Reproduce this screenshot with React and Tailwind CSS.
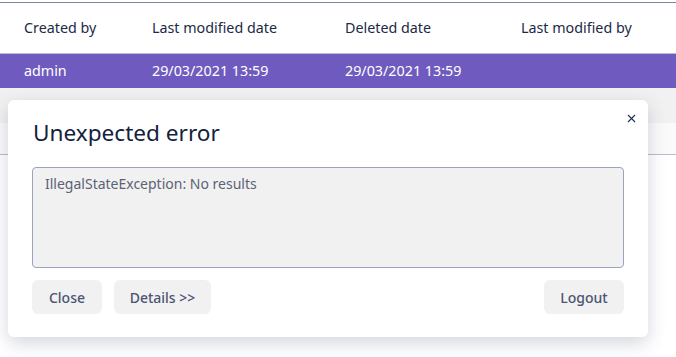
import { X } from "lucide-react";

const cols = ["Created by", "Last modified date", "Deleted date", "Last modified by"];
const colW = ["w-[128px]", "w-[193px]", "w-[176px]", "w-[155px]"];
const row = ["admin", "29/03/2021 13:59", "29/03/2021 13:59", ""];

export default function App() {
  return (
    <div className="relative w-[676px] h-[357px] overflow-hidden bg-white text-[#1b2a47]" style={{ fontFamily: '"Noto Sans", sans-serif' }}>
      <div className="h-[2px]" />
      <div className="border-t border-[#7c85a6]">
        <div className="flex h-[51px] items-center pl-6 text-[14.3px] border-b border-[#b7bdd0]">
          {cols.map((c, i) => (
            <div key={c} className={colW[i]}>{c}</div>
          ))}
        </div>
        <div className="flex h-[34px] items-center pl-6 text-[14.3px] bg-[#6f5bbf] text-white">
          {row.map((c, i) => (
            <div key={i} className={colW[i]}>{c}</div>
          ))}
        </div>
        <div className="h-[35px] bg-[#f1f1f1]" />
        <div className="h-[32px] bg-[#fafafa] border-b border-[#b7bdd0]" />
      </div>

      <div className="absolute left-2 top-[100px] w-[640px] h-[237px] bg-white rounded-md shadow-[0_6px_18px_rgba(60,70,100,0.22)] px-6 pt-[18px]">
        <button className="absolute right-[10px] top-[12px] text-[#1f2d55]">
          <X size={13} strokeWidth={2} />
        </button>
        <h2 className="text-[22.6px] leading-[30px] text-[#14213d] pl-[1px]">Unexpected error</h2>
        <div className="mt-[19px] h-[101px] rounded border border-[#9aa3bf] bg-[#f1f1f1] px-3 pt-[5px] text-[14px] text-[#5b6274]">
          IllegalStateException: No results
        </div>
        <div className="mt-3 flex gap-3 text-[14px] font-medium text-[#4b5473]">
          <button className="h-[34px] w-[70px] rounded-md bg-[#f1f1f1]">Close</button>
          <button className="h-[34px] w-[97px] rounded-md bg-[#f1f1f1]">Details &gt;&gt;</button>
          <button className="ml-auto h-[34px] w-[80px] rounded-md bg-[#f1f1f1]">Logout</button>
        </div>
      </div>
    </div>
  );
}
